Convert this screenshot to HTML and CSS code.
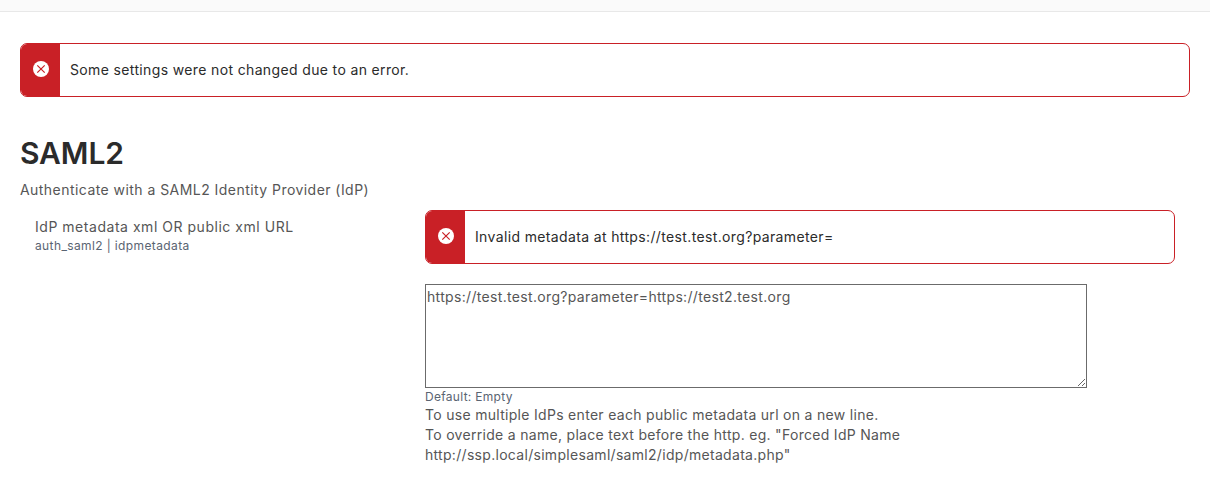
FILE: index.html
```html
<!DOCTYPE html>
<html lang="en">
<head>
  <meta charset="UTF-8">
  <title>SAML2</title>
  <link rel="stylesheet" href="styles.css">
</head>
<body>
  <div class="topbar"></div>
  <main class="content">
    <div class="alert alert-page">
      <div class="alert-icon">
        <svg width="16" height="16" viewBox="0 0 16 16"><circle cx="8" cy="8" r="8" fill="#fff"/><path d="M4.3 4.3l7.4 7.4M11.7 4.3l-7.4 7.4" stroke="#c92026" stroke-width="1.2" fill="none"/></svg>
      </div>
      <div class="alert-text">Some settings were not changed due to an error.</div>
    </div>
    <h1>SAML2</h1>
    <p class="summary">Authenticate with a SAML2 Identity Provider (IdP)</p>
    <div class="setting">
      <div class="setting-label">
        <div class="label-name">IdP metadata xml OR public xml URL</div>
        <div class="label-key">auth_saml2 | idpmetadata</div>
      </div>
      <div class="setting-field">
        <div class="alert alert-field">
          <div class="alert-icon">
            <svg width="16" height="16" viewBox="0 0 16 16"><circle cx="8" cy="8" r="8" fill="#fff"/><path d="M4.3 4.3l7.4 7.4M11.7 4.3l-7.4 7.4" stroke="#c92026" stroke-width="1.2" fill="none"/></svg>
          </div>
          <div class="alert-text">Invalid metadata at https://test.test.org?parameter=</div>
        </div>
        <textarea class="metadata" spellcheck="false">https://test.test.org?parameter=https://test2.test.org</textarea>
        <div class="default-note">Default: Empty</div>
        <div class="help">
          To use multiple IdPs enter each public metadata url on a new line.<br>
          To override a name, place text before the http. eg. "Forced IdP Name<br>
          http://ssp.local/simplesaml/saml2/idp/metadata.php"
        </div>
      </div>
    </div>
  </main>
</body>
</html>
```
FILE: styles.css
```css
body {
  margin: 0;
  background-color: #fff;
  font-family: Inter, "Liberation Sans", sans-serif;
  color: #565656;
}

.topbar {
  height: 11px;
  background-color: #fafafa;
  border-bottom: 1px solid #e8e8e8;
}

.content {
  padding: 31px 20px 0 20px;
}

.alert {
  display: flex;
  height: 54px;
  box-sizing: border-box;
  border: 1px solid #c92026;
  border-radius: 7px;
  overflow: hidden;
}

.alert-icon {
  width: 39px;
  flex-shrink: 0;
  display: flex;
  align-items: center;
  justify-content: center;
  background-color: #c92026;
}

.alert-icon svg {
  margin-bottom: 2px;
}

.alert-text {
  display: flex;
  align-items: center;
  padding-left: 10px;
  padding-bottom: 2px;
  font-size: 14px;
  letter-spacing: 0.36px;
  color: #2b2b2b;
}

h1 {
  margin: 37px 0 0 0;
  font-size: 30px;
  line-height: 38px;
  font-weight: 600;
  letter-spacing: -0.1px;
  color: #2b2b2b;
}

.summary {
  margin: 8px 0 0 0;
  font-size: 14px;
  line-height: 20px;
  letter-spacing: 0.45px;
}

.setting {
  display: flex;
  margin-top: 10px;
}

.setting-label {
  width: 405px;
  flex-shrink: 0;
  padding: 8px 0 0 15px;
  box-sizing: border-box;
}

.label-name {
  font-size: 14px;
  line-height: 18px;
  letter-spacing: 0.53px;
}

.label-key {
  margin-top: 1px;
  font-size: 12px;
  line-height: 18px;
  letter-spacing: 0.38px;
  color: #5a6472;
}

.setting-field {
  flex: 1;
  padding-right: 15px;
}

.metadata {
  display: block;
  width: 662px;
  height: 104px;
  box-sizing: border-box;
  margin: 20px 0 0 0;
  padding: 3px 1px;
  border: 1px solid #6b6b6b;
  border-radius: 0;
  outline: none;
  font-family: inherit;
  font-size: 14px;
  line-height: 18px;
  letter-spacing: 0.33px;
  color: #565656;
}

.default-note {
  margin-top: 2px;
  font-size: 12px;
  line-height: 14px;
  letter-spacing: 0.3px;
  color: #5a6472;
}

.help {
  margin-top: 1px;
  font-size: 14px;
  line-height: 20px;
  letter-spacing: 0.3px;
}
```
